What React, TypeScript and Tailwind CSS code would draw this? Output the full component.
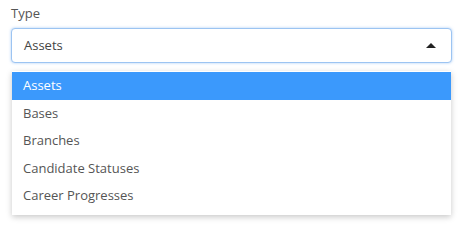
import React from 'react';

const options = ['Assets', 'Bases', 'Branches', 'Candidate Statuses', 'Career Progresses'];

export default function App() {
  const selected = 'Assets';
  return (
    <div className="w-[463px] h-[226px] bg-white overflow-hidden font-['Open_Sans',sans-serif] text-[13px] text-[#555]">
      <div className="pl-[11px] pt-[4px] w-[452px]">
        <label className="block leading-[18px] mb-[6px] text-[#555]">Type</label>
        <div className="relative">
          <div className="h-[35px] flex items-center justify-between pl-[12px] pr-[15px] border border-[#9cc4f2] rounded-[4px] shadow-[0_0_3px_rgba(102,163,235,0.55)] bg-white">
            <span className="text-[#444]">{selected}</span>
            <svg width="10" height="5" viewBox="0 0 10 5" className="text-[#222]">
              <path d="M0 5 L5 0 L10 5 Z" fill="currentColor" />
            </svg>
          </div>
          <div className="mt-[8px] ml-[11px] mr-[12px] h-[40px] bg-[#f4f4f4] border-l border-[#e3e3e3]" />
          <ul className="absolute left-[1px] right-[1px] top-[43px] bg-white pt-[1px] pb-[5px] shadow-[0_2px_6px_rgba(0,0,0,0.22)]">
            {options.map(opt => (
              <li
                key={opt}
                className={
                  opt === selected
                    ? 'h-[27.5px] flex items-center pl-[11px] bg-[#3b99fc] text-white'
                    : 'h-[27.5px] flex items-center pl-[11px] text-[#555]'
                }
              >
                {opt}
              </li>
            ))}
          </ul>
        </div>
      </div>
    </div>
  );
}
